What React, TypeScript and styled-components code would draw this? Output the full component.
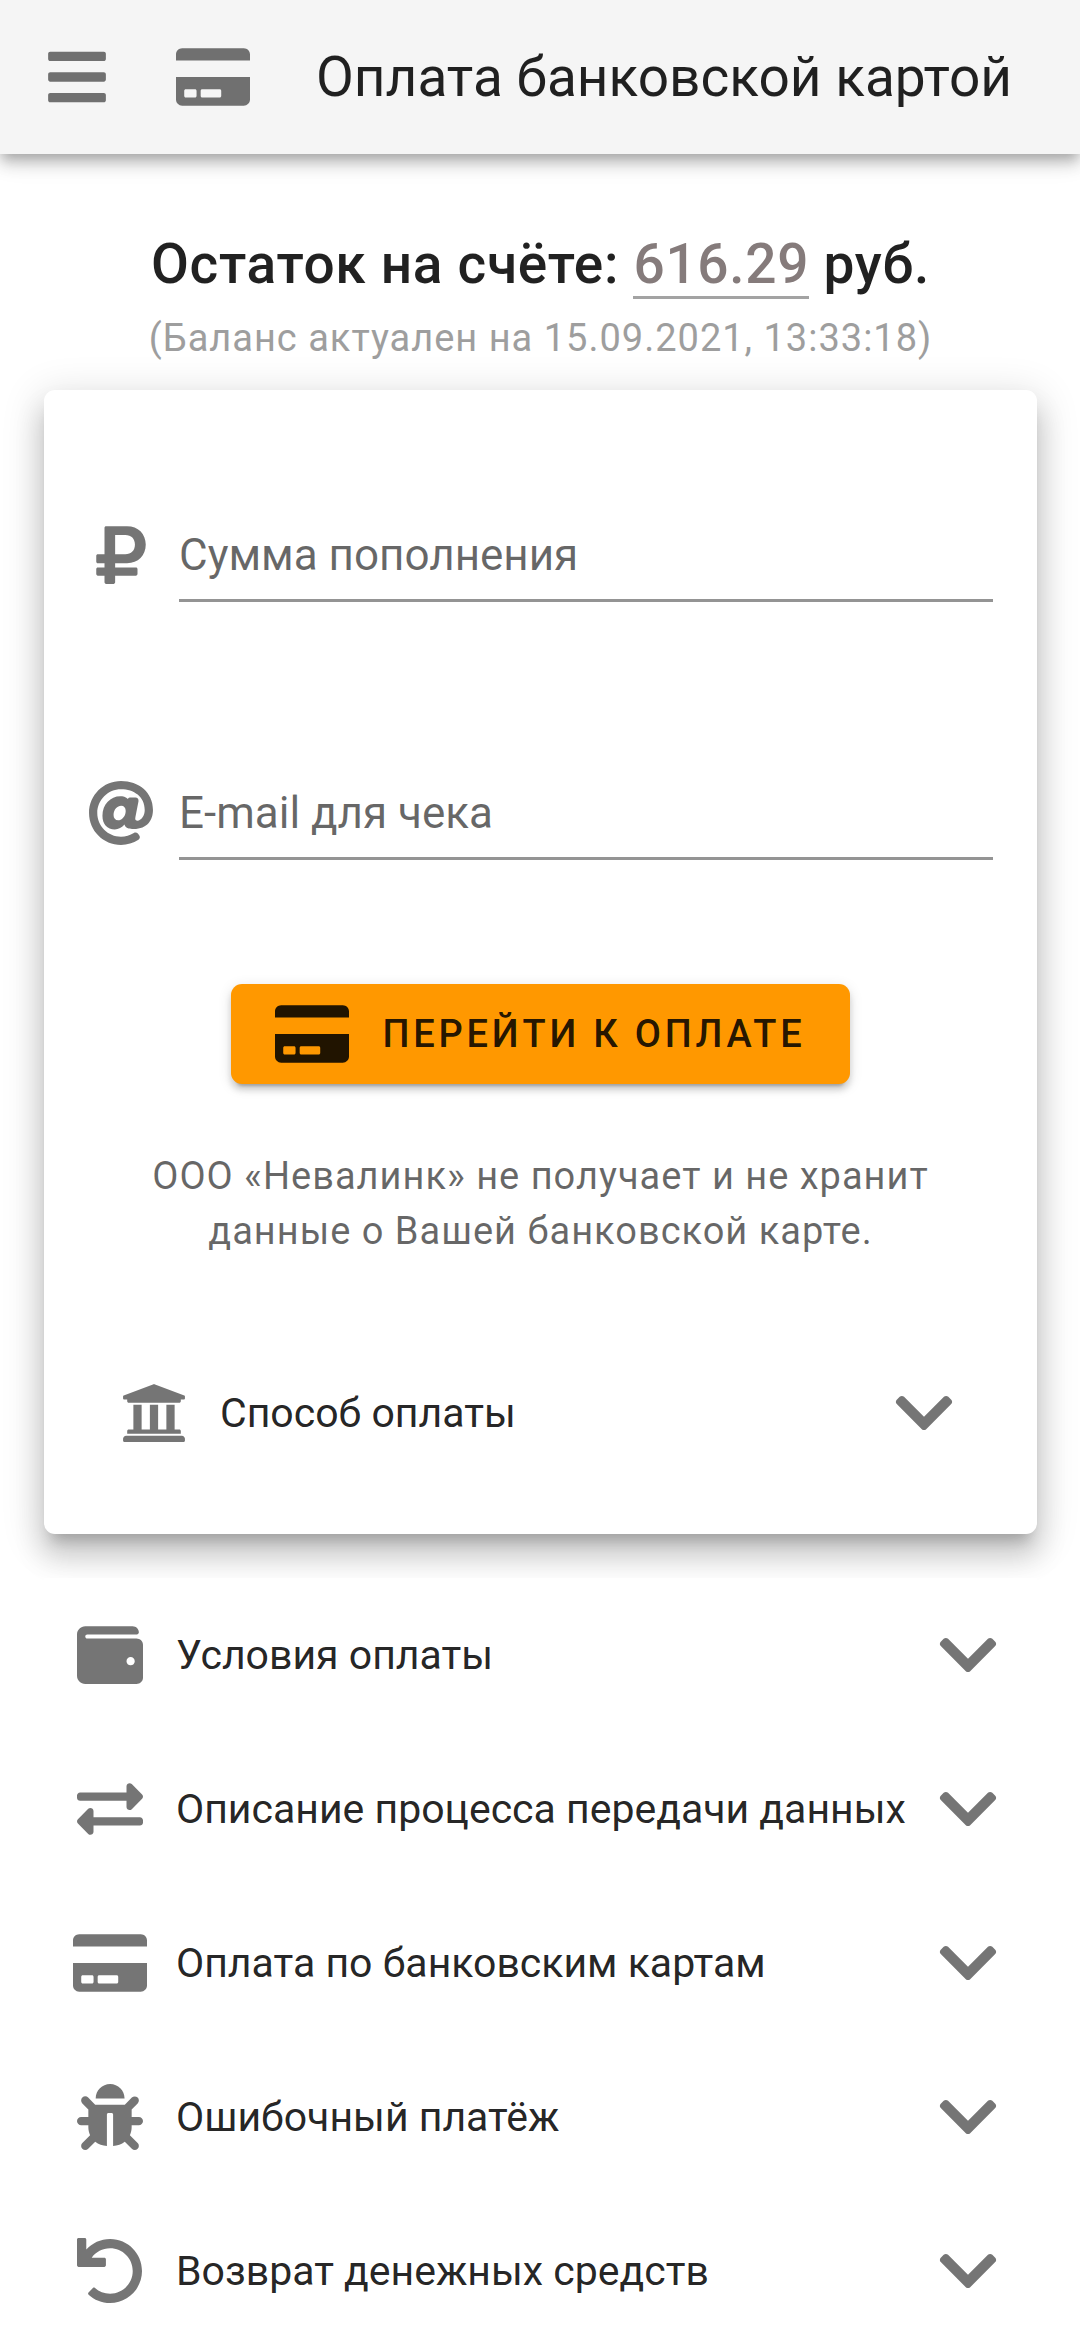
import React, { useState } from 'react';
import styled, { createGlobalStyle } from 'styled-components';
import type { IconType } from 'react-icons';
import {
  FaAt,
  FaBars,
  FaBug,
  FaChevronDown,
  FaCreditCard,
  FaExchangeAlt,
  FaRubleSign,
  FaUndo,
  FaUniversity,
  FaWallet,
} from 'react-icons/fa';

const GlobalStyle = createGlobalStyle`
  *, *::before, *::after { box-sizing: border-box; }
  body {
    margin: 0;
    background: #fff;
    color: rgba(0, 0, 0, 0.87);
    font-family: Roboto, "Noto Sans", sans-serif;
  }
  button, input { font: inherit; color: inherit; }
  h1, h2, p, ul { margin: 0; padding: 0; }
`;

const Shell = styled.div`
  display: flex;
  flex-direction: column;
  height: 100vh;
`;

const AppBar = styled.header`
  position: relative;
  z-index: 1;
  flex: none;
  display: flex;
  align-items: center;
  height: 154px;
  padding: 0 48px;
  background: #f5f5f5;
  box-shadow: 0 6px 11px -3px rgba(0, 0, 0, 0.2), 0 11px 14px rgba(0, 0, 0, 0.14),
    0 3px 28px rgba(0, 0, 0, 0.12);
`;

const Glyph = styled.span<{ $tone?: string; $width?: number }>`
  flex: none;
  display: inline-flex;
  justify-content: center;
  color: ${(p) => p.$tone ?? 'rgba(0, 0, 0, 0.54)'};

  svg {
    flex: none;
    display: block;
    width: ${(p) => p.$width ?? 66}px;
    height: 66px;
  }
`;

const IconSlot = styled(Glyph)`
  width: 66px;
`;

const MenuButton = styled.button`
  display: flex;
  padding: 0;
  border: 0;
  background: none;
  margin-right: 70px;
  cursor: pointer;
`;

const BarTitle = styled.h1`
  margin-left: 66px;
  font-size: 55px;
  line-height: 82px;
  font-weight: 400;
  white-space: nowrap;
`;

const Main = styled.main`
  flex: 1;
  min-height: 0;
  overflow-y: auto;
  scrollbar-width: none;
  padding: 66px 43px 0 44px;
`;

const Balance = styled.h2`
  font-size: 55px;
  line-height: 88px;
  font-weight: 500;
  letter-spacing: 0.0125em;
  text-align: center;
`;

const Amount = styled.span`
  color: #857b7b;
  border-bottom: 3px solid #a3a3a3;
`;

const Updated = styled.p`
  margin-bottom: 22px;
  color: #9e9e9e;
  font-size: 38px;
  line-height: 60px;
  letter-spacing: 1px;
  text-align: center;
`;

const Card = styled.form`
  display: flex;
  flex-direction: column;
  margin-bottom: 44px;
  padding: 44px;
  border-radius: 11px;
  background: #fff;
  box-shadow: 0 14px 14px -8px rgba(0, 0, 0, 0.2), 0 22px 28px 3px rgba(0, 0, 0, 0.14),
    0 8px 39px 6px rgba(0, 0, 0, 0.12);
`;

const Field = styled.div`
  display: flex;
  align-items: center;
  gap: 25px;
  padding: 77px 0 90px;
`;

/* The bottom margin keeps the icon centred on the text, above the underline. */
const FieldIcon = styled(IconSlot)`
  margin-bottom: 3px;
`;

const FieldBox = styled.div`
  flex: 1;
  display: grid;
  align-items: center;
  height: 91px;
  border-bottom: 3px solid #949494;

  > * { grid-area: 1 / 1; }

  &:has(input:not(:placeholder-shown)) label { visibility: hidden; }
`;

const FieldLabel = styled.label`
  color: rgba(0, 0, 0, 0.6);
  font-size: 44px;
  line-height: 66px;
`;

const FieldInput = styled.input`
  width: 100%;
  height: 88px;
  padding: 0;
  border: 0;
  outline: 0;
  background: none;
  font-size: 44px;
`;

const PayButton = styled.button`
  align-self: center;
  display: flex;
  align-items: center;
  gap: 33px;
  height: 100px;
  margin: 34px 0 65px;
  padding: 0 44px;
  border: 0;
  border-radius: 11px;
  background: #ff9800;
  font-size: 38px;
  font-weight: 500;
  letter-spacing: 0.1em;
  text-transform: uppercase;
  white-space: nowrap;
  cursor: pointer;
  box-shadow: 0 8px 3px -6px rgba(0, 0, 0, 0.2), 0 6px 6px rgba(0, 0, 0, 0.14),
    0 3px 14px rgba(0, 0, 0, 0.12);
`;

const Note = styled.p`
  margin-bottom: 77px;
  color: rgba(0, 0, 0, 0.6);
  font-size: 38px;
  line-height: 55px;
  letter-spacing: 1px;
  text-align: center;
`;

const PanelList = styled.ul`
  position: relative;
  list-style: none;
  background: #fff;
`;

const PanelHeader = styled.button`
  display: flex;
  align-items: center;
  width: 100%;
  height: 154px;
  padding: 0 40px 0 33px;
  border: 0;
  background: none;
  text-align: left;
  cursor: pointer;
`;

const PanelTitle = styled.span`
  flex: 1;
  margin-left: 33px;
  font-size: 41px;
  line-height: 55px;
  white-space: nowrap;
`;

interface PanelProps {
  icon: IconType;
  iconWidth?: number;
  title: string;
}

function Panel({ icon: Icon, iconWidth, title }: PanelProps) {
  const [open, setOpen] = useState(false);
  return (
    <PanelHeader type="button" aria-expanded={open} onClick={() => setOpen(!open)}>
      <IconSlot $width={iconWidth}><Icon /></IconSlot>
      <PanelTitle>{title}</PanelTitle>
      <Glyph $width={58}><FaChevronDown /></Glyph>
    </PanelHeader>
  );
}

interface TextFieldProps {
  id: string;
  icon: IconType;
  label: string;
  type: string;
}

function TextField({ id, icon: Icon, label, type }: TextFieldProps) {
  return (
    <Field>
      <FieldIcon><Icon /></FieldIcon>
      <FieldBox>
        <FieldLabel htmlFor={id}>{label}</FieldLabel>
        <FieldInput id={id} type={type} placeholder=" " />
      </FieldBox>
    </Field>
  );
}

const panels: PanelProps[] = [
  { icon: FaWallet, title: 'Условия оплаты' },
  { icon: FaExchangeAlt, title: 'Описание процесса передачи данных' },
  { icon: FaCreditCard, iconWidth: 74, title: 'Оплата по банковским картам' },
  { icon: FaBug, title: 'Ошибочный платёж' },
  { icon: FaUndo, title: 'Возврат денежных средств' },
];

export default function App() {
  return (
    <Shell>
      <GlobalStyle />
      <AppBar>
        <MenuButton type="button" aria-label="Меню">
          <Glyph $width={58}><FaBars /></Glyph>
        </MenuButton>
        <Glyph $width={74}><FaCreditCard /></Glyph>
        <BarTitle>Оплата банковской картой</BarTitle>
      </AppBar>
      <Main>
        <Balance>
          Остаток на счёте: <Amount>616.29</Amount> руб.
        </Balance>
        <Updated>(Баланс актуален на 15.09.2021, 13:33:18)</Updated>
        <Card onSubmit={(e) => e.preventDefault()}>
          <TextField id="amount" icon={FaRubleSign} label="Сумма пополнения" type="text" />
          <TextField id="email" icon={FaAt} label="E-mail для чека" type="email" />
          <PayButton type="submit">
            <Glyph $tone="rgba(0, 0, 0, 0.87)" $width={74}><FaCreditCard /></Glyph>
            Перейти к оплате
          </PayButton>
          <Note>ООО «Невалинк» не получает и не хранит данные о Вашей банковской карте.</Note>
          <Panel icon={FaUniversity} title="Способ оплаты" />
        </Card>
        <PanelList>
          {panels.map((p) => (
            <li key={p.title}>
              <Panel {...p} />
            </li>
          ))}
        </PanelList>
      </Main>
    </Shell>
  );
}
